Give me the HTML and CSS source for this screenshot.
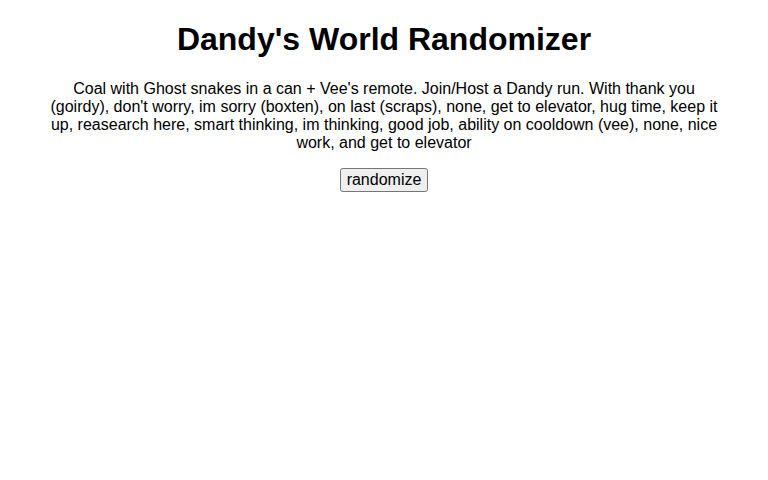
FILE: index.html
```html
<!DOCTYPE html>
<html lang="en">
<head>
    <meta charset="UTF-8">
    <meta name="viewport" content="width=device-width, initial-scale=1.0">
    <title>Dandy's World Randomizer</title>
    <link rel="stylesheet" href="styles.css">
</head>
<body>
    <h1>Dandy's World Randomizer</h1>
    <p id="result">Coal with Ghost snakes in a can + Vee's remote. Join/Host a Dandy run. With thank you (goirdy), don't worry, im sorry (boxten), on last (scraps), none, get to elevator, hug time, keep it up, reasearch here, smart thinking, im thinking, good job, ability on cooldown (vee), none, nice work, and get to elevator</p>
    <button class="btn">randomize</button>
</body>
</html>
```

FILE: styles.css
```css
body {
    font-family: "Liberation Sans", Arial, sans-serif;
    margin: 0;
    padding: 0 46px;
    text-align: center;
    color: #000;
    background: #fff;
}

h1 {
    font-size: 32px;
    margin: 0.67em 0;
}

p {
    font-size: 16px;
    margin: 16px 0;
}

.btn {
    font-family: inherit;
    font-size: 16px;
    color: #000;
    background: #efefef;
    border: 1px solid #767676;
    border-radius: 3px;
    padding: 2px 6px;
    cursor: pointer;
}

.btn:hover {
    background: #e5e5e5;
}
```
